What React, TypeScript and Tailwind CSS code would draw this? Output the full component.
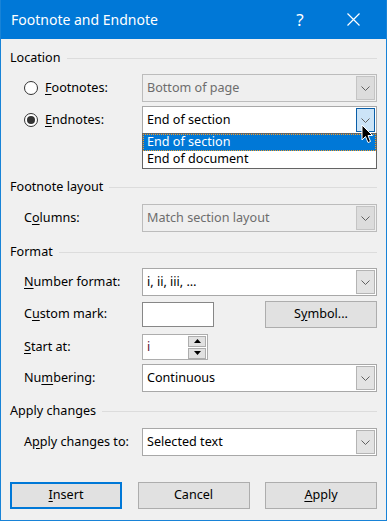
import type { ReactNode } from 'react';

const Chevron = ({ color = '#606060' }: { color?: string }) => (
  <svg width="9" height="5" viewBox="0 0 9 5" fill="none">
    <path d="M0.5 0.5 L4.5 4.5 L8.5 0.5" stroke={color} strokeWidth="1" />
  </svg>
);

const U = ({ children }: { children: ReactNode }) => <span className="underline underline-offset-2">{children}</span>;

type SelectProps = { value: string; disabled?: boolean; hot?: boolean; className?: string };

const Select = ({ value, disabled, hot, className = '' }: SelectProps) => (
  <div
    className={`flex h-[28px] w-[235px] items-stretch border ${
      disabled ? 'border-[#bcbcbc] bg-[#efefef] text-[#6d6d6d]' : 'border-[#a8a8a8] bg-white text-black'
    } ${className}`}
  >
    <span className="flex flex-1 items-center pl-[4px]">{value}</span>
    <span
      className={`m-px flex w-[19px] items-center justify-center border ${
        hot ? 'border-[#0a5ea8] bg-[#cce4f7]' : disabled ? 'border-[#c4c4c4] bg-[#dcdcdc]' : 'border-[#b4b4b4] bg-[#e3e3e3]'
      }`}
    >
      <Chevron />
    </span>
  </div>
);

const Heading = ({ label, className = '' }: { label: string; className?: string }) => (
  <div className={`flex h-[16px] items-center gap-[6px] pl-[9px] ${className}`}>
    <span className="text-black">{label}</span>
    <div className="h-px flex-1 bg-[#dcdcdc]" />
  </div>
);

const Row = ({ label, children, className = '' }: { label: ReactNode; children: ReactNode; className?: string }) => (
  <div className={`flex items-center pl-[23px] ${className}`}>
    <span className="w-[118px]">{label}</span>
    {children}
  </div>
);

const Radio = ({ checked }: { checked?: boolean }) => (
  <span className="flex h-[14px] w-[14px] items-center justify-center rounded-full border border-[#333] bg-white">
    {checked && <span className="h-[8px] w-[8px] rounded-full bg-[#333]" />}
  </span>
);

const Button = ({ children, primary }: { children: ReactNode; primary?: boolean }) => (
  <div
    className={`flex h-[27px] w-[112px] items-center justify-center bg-[#e1e1e1] ${
      primary ? 'border-2 border-[#0078d7]' : 'border border-[#adadad]'
    }`}
  >
    {children}
  </div>
);

export default function App() {
  return (
    <div
      className="flex h-[521px] w-[387px] flex-col border-x border-b border-[#1883d7] bg-[#f0f0f0] text-[12.6px] text-black"
      style={{ fontFamily: '"Segoe UI", "Noto Sans", sans-serif' }}
    >
      <div className="flex h-[39px] shrink-0 items-center bg-[#0078d7] pl-[10px] text-white">
        <span className="flex-1 text-[14px]">Footnote and Endnote</span>
        <span className="w-[40px] text-center text-[17px]">?</span>
        <span className="flex w-[66px] items-center justify-center">
          <svg width="13" height="13" viewBox="0 0 13 13">
            <path d="M0.5 0.5 L12.5 12.5 M12.5 0.5 L0.5 12.5" stroke="white" strokeWidth="1.2" />
          </svg>
        </span>
      </div>

      <div className="flex flex-1 flex-col pr-[9px]">
        <Heading label="Location" className="mt-[11px]" />

        <div className="mt-[8px] flex items-center pl-[23px]">
          <Radio />
          <span className="ml-[7px] w-[97px]">
            <U>F</U>ootnotes:
          </span>
          <Select value="Bottom of page" disabled />
        </div>

        <div className="relative mt-[4px] flex items-center pl-[23px]">
          <Radio checked />
          <span className="ml-[7px] w-[97px]">
            <U>E</U>ndnotes:
          </span>
          <Select value="End of section" hot />
          <div className="absolute left-[141px] top-[27px] z-10 w-[235px] border border-[#646464] bg-white">
            <div className="flex h-[17px] items-center border border-dotted border-[#f59a23] bg-[#0078d7] pl-[3px] text-white">
              End of section
            </div>
            <div className="flex h-[17px] items-center pl-[4px]">End of document</div>
          </div>
          <svg className="absolute left-[360px] top-[18px] z-20" width="13" height="20" viewBox="0 0 13 20">
            <path
              d="M1 1 L1 16 L4.5 12.5 L7 18.5 L9.5 17.5 L7 11.5 L11.5 11.5 Z"
              fill="black"
              stroke="white"
              strokeWidth="1"
              strokeLinejoin="round"
            />
          </svg>
        </div>

        <Heading label="Footnote layout" className="mt-[45px]" />
        <Row
          className="mt-[9px]"
          label={
            <>
              C<U>o</U>lumns:
            </>
          }
        >
          <Select value="Match section layout" disabled />
        </Row>

        <Heading label="Format" className="mt-[12px]" />
        <Row
          className="mt-[8px]"
          label={
            <>
              <U>N</U>umber format:
            </>
          }
        >
          <Select value="i, ii, iii, …" />
        </Row>

        <Row
          className="mt-[5px]"
          label={
            <>
              C<U>u</U>stom mark:
            </>
          }
        >
          <div className="h-[25px] w-[72px] border border-[#878787] bg-white" />
          <div className="ml-auto">
            <Button>
              S<U>y</U>mbol...
            </Button>
          </div>
        </Row>

        <Row
          className="mt-[6px]"
          label={
            <>
              <U>S</U>tart at:
            </>
          }
        >
          <div className="flex h-[26px] w-[66px] items-center border border-[#adadad] bg-white">
            <span className="flex-1 pl-[4px] text-[#5a1030]">i</span>
            <div className="mr-px flex flex-col gap-px">
              <div className="flex h-[11px] w-[18px] items-center justify-center border border-[#adadad] bg-[#e1e1e1]">
                <svg width="7" height="4" viewBox="0 0 7 4">
                  <path d="M3.5 0 L7 4 L0 4 Z" fill="black" />
                </svg>
              </div>
              <div className="flex h-[11px] w-[18px] items-center justify-center border border-[#adadad] bg-[#e1e1e1]">
                <svg width="7" height="4" viewBox="0 0 7 4">
                  <path d="M0 0 L7 0 L3.5 4 Z" fill="black" />
                </svg>
              </div>
            </div>
          </div>
        </Row>

        <Row
          className="mt-[4px]"
          label={
            <>
              Nu<U>m</U>bering:
            </>
          }
        >
          <Select value="Continuous" />
        </Row>

        <Heading label="Apply changes" className="mt-[11px]" />
        <Row
          className="mt-[9px]"
          label={
            <>
              A<U>p</U>ply changes to:
            </>
          }
        >
          <Select value="Selected text" />
        </Row>

        <div className="mt-[26px] flex justify-between pl-[9px]">
          <Button primary>
            <U>I</U>nsert
          </Button>
          <Button>Cancel</Button>
          <Button>
            <U>A</U>pply
          </Button>
        </div>
      </div>
    </div>
  );
}
